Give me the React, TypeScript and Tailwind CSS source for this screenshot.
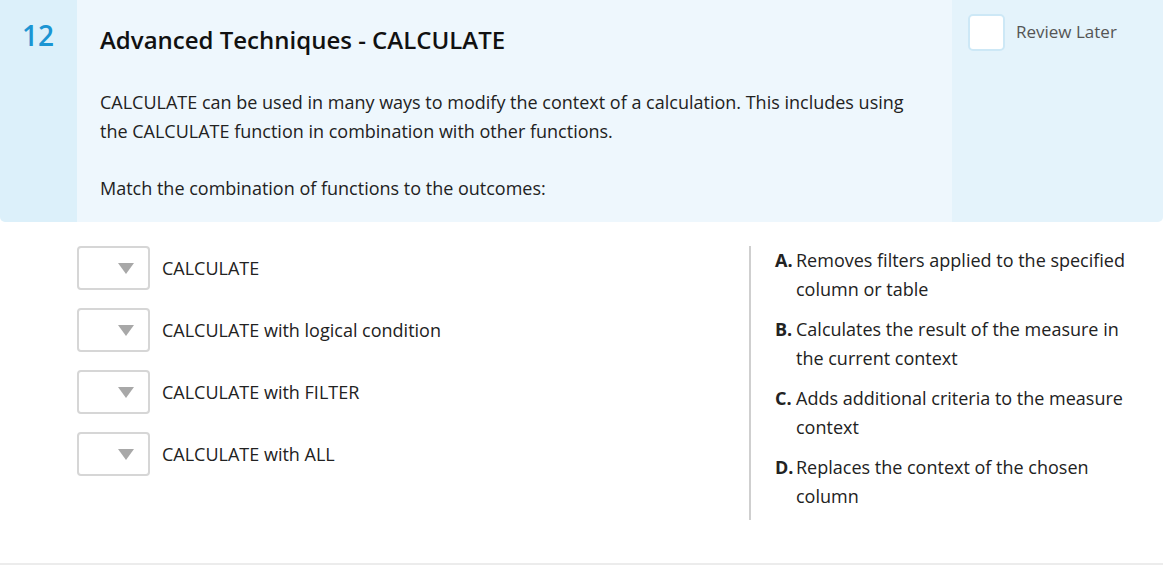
import React from "react";

const font = { fontFamily: '"Open Sans", "Noto Sans", sans-serif' };

function Dropdown() {
  return (
    <div className="w-[73px] h-[44px] rounded-[4px] border-2 border-[#d6d6d6] bg-white flex items-center justify-end pr-[14px] shrink-0">
      <svg width="16" height="11" viewBox="0 0 16 11">
        <polygon points="0,0 16,0 8,11" fill="#a8a8a8" />
      </svg>
    </div>
  );
}

const left = [
  "CALCULATE",
  "CALCULATE with logical condition",
  "CALCULATE with FILTER",
  "CALCULATE with ALL",
];

const right: [string, string][] = [
  ["A.", "Removes filters applied to the specified column or table"],
  ["B.", "Calculates the result of the measure in the current context"],
  ["C.", "Adds additional criteria to the measure context"],
  ["D.", "Replaces the context of the chosen column"],
];

export default function App() {
  return (
    <div className="w-[1169px] h-[570px] bg-white text-[#222]" style={font}>
      <div className="w-[1163px]">
        <div className="flex h-[222px] rounded-b-[5px] overflow-hidden">
          <div className="w-[77px] bg-[#dcf0fa] pl-[22px] pt-[15px]">
            <span className="text-[28px] font-semibold text-[#1b95d3] leading-[40px]">12</span>
          </div>
          <div className="w-[875px] bg-[#eef7fd] pl-[23px] pt-[23px]">
            <h1 className="text-[24px] font-semibold text-[#111] leading-[34px]">
              Advanced Techniques - CALCULATE
            </h1>
            <p className="mt-[31px] text-[18px] leading-[29px] w-[815px]">
              CALCULATE can be used in many ways to modify the context of a calculation. This includes using the CALCULATE function in combination with other functions.
            </p>
            <p className="mt-[28px] text-[18px] leading-[29px]">
              Match the combination of functions to the outcomes:
            </p>
          </div>
          <div className="flex-1 bg-[#e4f3fb] pl-[16px] pt-[14px] flex items-start gap-[11px]">
            <div className="w-[37px] h-[37px] rounded-[5px] border-2 border-[#cde8f6] bg-white" />
            <span className="text-[17px] leading-[36px] text-[#555]">Review Later</span>
          </div>
        </div>

        <div className="flex pt-[24px] h-[343px] border-b-2 border-[#ececec]">
          <div className="w-[749px] pl-[77px] flex flex-col gap-[18px]">
            {left.map((t) => (
              <div key={t} className="flex items-center gap-[12px]">
                <Dropdown />
                <span className="text-[18px]">{t}</span>
              </div>
            ))}
          </div>
          <div className="w-[2px] h-[274px] bg-[#cfcfcf]" />
          <div className="flex-1 pl-[24px] flex flex-col gap-[11px]">
            {right.map(([k, v]) => (
              <div key={k} className="flex text-[18px] leading-[29px]">
                <span className="font-bold w-[21px] shrink-0">{k}</span>
                <span className="w-[345px]">{v}</span>
              </div>
            ))}
          </div>
        </div>
      </div>
    </div>
  );
}
